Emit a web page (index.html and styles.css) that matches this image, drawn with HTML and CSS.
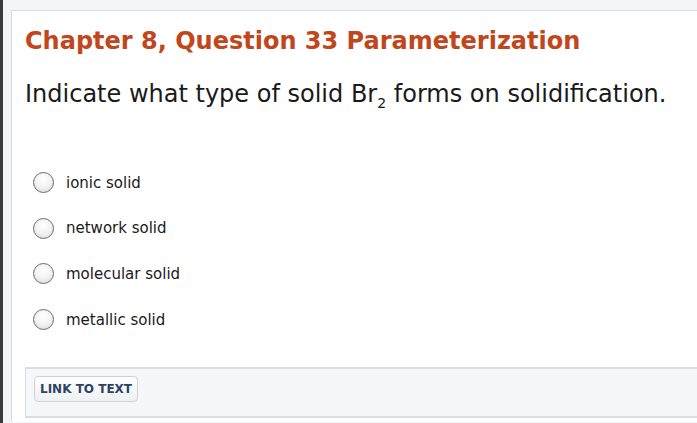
FILE: index.html
```html
<!DOCTYPE html>
<html>
<head>
<meta charset="utf-8">
<link rel="stylesheet" href="styles.css">
</head>
<body>
<div class="frame">
  <div class="card">
    <h1 class="title">Chapter 8, Question 33 Parameterization</h1>
    <p class="question">Indicate what type of solid Br<sub>2</sub> forms on solidification.</p>
    <div class="options">
      <label class="option"><span class="radio"></span><span>ionic solid</span></label>
      <label class="option"><span class="radio"></span><span>network solid</span></label>
      <label class="option"><span class="radio"></span><span>molecular solid</span></label>
      <label class="option"><span class="radio"></span><span>metallic solid</span></label>
    </div>
    <div class="footer">
      <span class="btn">LINK TO TEXT</span>
    </div>
  </div>
</div>
</body>
</html>
```
FILE: styles.css
```css
html, body {
  margin: 0;
  padding: 0;
}
body {
  width: 697px;
  height: 423px;
  overflow: hidden;
  background: #f4f5f7;
  font-family: "DejaVu Sans", Verdana, sans-serif;
  color: #1a1a1a;
}
.frame {
  height: 423px;
  border-left: 3px solid #3a3b3d;
  padding: 10px 0 0 8px;
  box-sizing: border-box;
}
.card {
  background: #fff;
  border-top: 1px solid #d8dbe0;
  border-left: 1px solid #d8dbe0;
  height: 412px;
  padding: 0 0 0 13px;
  box-sizing: border-box;
}
.title {
  margin: 0;
  padding-top: 15px;
  font-size: 24px;
  font-weight: bold;
  color: #c2461c;
  line-height: 30px;
}
.question {
  margin: 23px 0 0 0;
  font-size: 24px;
  line-height: 30px;
}
.question sub {
  font-size: 14px;
  vertical-align: -6px;
  line-height: 0;
}
.options {
  display: flex;
  flex-direction: column;
  gap: 24.7px;
  margin-top: 63px;
  padding-left: 8px;
}
.option {
  display: flex;
  align-items: center;
  gap: 12px;
  font-size: 15px;
  height: 21px;
}
.radio {
  width: 19px;
  height: 19px;
  border: 1px solid #6b6b6b;
  border-radius: 50%;
  background: radial-gradient(circle at 50% 35%, #ffffff 0%, #f2f2f2 50%, #d6d6d6 100%);
  flex: none;
}
.footer {
  margin-top: 37px;
  background: #f6f7f9;
  border-top: 2px solid #dcdde0;
  border-bottom: 2px solid #dcdde0;
  border-left: 1px solid #dcdde0;
  height: 51px;
  padding: 7px 0 0 8px;
  box-sizing: border-box;
}
.btn {
  display: inline-block;
  font-size: 12px;
  font-weight: bold;
  color: #2c4463;
  padding: 5px 5px 5px 5px;
  border: 1px solid #cfd3d9;
  border-radius: 4px;
  background: linear-gradient(#ffffff, #eef0f3);
  line-height: 14px;
}
```
